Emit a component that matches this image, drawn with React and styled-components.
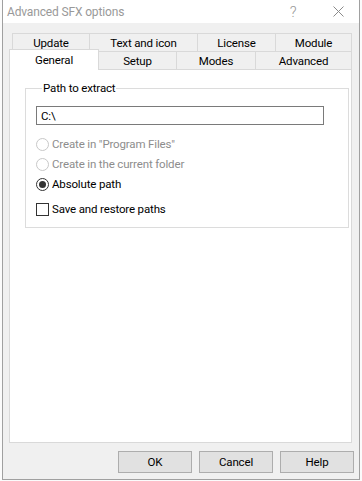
import React, { useState } from 'react'
import styled, { createGlobalStyle } from 'styled-components'

const GlobalStyle = createGlobalStyle`
  html, body {
    margin: 0;
    padding: 0;
    background: #fbfbfb;
  }
  body {
    font-family: Roboto, "Noto Sans", sans-serif;
    font-size: 11.5px;
    letter-spacing: -0.15px;
    line-height: 16px;
    color: #000;
  }
`

const Window = styled.div`
  box-sizing: border-box;
  width: 358px;
  height: 480px;
  margin-left: 2px;
  border: 1px solid #a0a0a0;
  border-top: none;
  background: #f0f0f0;
  display: flex;
  flex-direction: column;
`

const TitleBar = styled.div`
  height: 23px;
  display: flex;
  align-items: center;
  padding-left: 4px;
  background: #fff;
  color: #999;
  font-size: 12px;
`

const Title = styled.div`
  flex: 1;
`

const TitleButton = styled.div`
  width: ${p => p.$w}px;
  display: flex;
  justify-content: center;
  align-items: center;
  color: #9a9a9a;
  font-size: 15px;
  font-weight: 300;
`

const Body = styled.div`
  flex: 1;
  display: flex;
  flex-direction: column;
  padding: 10px 6px 0 6px;
`

const TabRow = styled.div`
  display: flex;
  height: ${p => p.$h}px;
  margin-left: ${p => p.$indent}px;
  margin-right: 1px;
  position: relative;
  z-index: ${p => p.$z};
`

const Tab = styled.div`
  box-sizing: border-box;
  width: ${p => p.$w}px;
  height: ${p => (p.$active ? 21 : 19)}px;
  margin-top: ${p => (p.$active ? -2 : 0)}px;
  border: 1px solid #d9d9d9;
  border-left: ${p => (p.$first ? '1px solid #d9d9d9' : 'none')};
  border-bottom: ${p => (p.$active ? 'none' : '1px solid #d9d9d9')};
  background: ${p => (p.$active ? '#fff' : '#f0f0f0')};
  display: flex;
  justify-content: center;
  align-items: ${p => (p.$active ? 'flex-start' : 'center')};
  padding-top: ${p => (p.$active ? 2 : 0)}px;
  cursor: default;
  ${p => p.$active && 'border-left: 1px solid #d9d9d9; border-right: 1px solid #d9d9d9;'}
`

const Panel = styled.div`
  box-sizing: border-box;
  height: 374px;
  margin-right: 1px;
  background: #fff;
  border: 1px solid #d9d9d9;
  padding: 10px 3px 0 15px;
`

const Group = styled.fieldset`
  box-sizing: border-box;
  margin: 0;
  width: 324px;
  height: 148px;
  border: 1px solid #dcdcdc;
  padding: 10px 0 0 10px;
  display: flex;
  flex-direction: column;
  legend {
    padding: 0 1px;
    margin-left: 6px;
    line-height: 16px;
  }
`

const PathInput = styled.input`
  box-sizing: border-box;
  width: 288px;
  height: 19px;
  border: 1px solid #7a7a7a;
  padding: 0 0 0 4px;
  font-family: inherit;
  font-size: inherit;
  letter-spacing: inherit;
  outline: none;
  margin: 0 0 9px 0;
`

const Option = styled.label`
  display: flex;
  align-items: center;
  height: 20px;
  color: ${p => (p.$disabled ? '#8d8d8d' : '#000')};
  margin-top: ${p => p.$gap || 0}px;
  gap: 3px;
`

const Radio = styled.span`
  box-sizing: border-box;
  width: 13px;
  height: 13px;
  border-radius: 50%;
  border: 1px solid ${p => (p.$disabled ? '#c8c8c8' : '#333')};
  display: flex;
  align-items: center;
  justify-content: center;
  &::after {
    content: '';
    width: 7px;
    height: 7px;
    border-radius: 50%;
    background: ${p => (p.$checked ? '#333' : 'transparent')};
  }
`

const Check = styled.span`
  box-sizing: border-box;
  width: 13px;
  height: 13px;
  border: 1px solid #333;
  background: #fff;
`

const Footer = styled.div`
  display: flex;
  justify-content: flex-end;
  gap: 7px;
  padding: 8px 0 0 0;
  margin-right: -1px;
`

const Button = styled.button`
  box-sizing: border-box;
  width: 74px;
  height: 22px;
  background: #e1e1e1;
  border: 1px solid #adadad;
  font-family: inherit;
  font-size: inherit;
  letter-spacing: inherit;
  color: #000;
  padding: 0;
`

const backTabs = [
  ['Update', 78],
  ['Text and icon', 108],
  ['License', 78],
  ['Module', 76],
]

const frontTabs = [
  ['General', 90],
  ['Setup', 78],
  ['Modes', 79],
  ['Advanced', 96],
]

export default function App() {
  const [path, setPath] = useState('C:\\')
  const [active, setActive] = useState('General')

  return (
    <>
      <GlobalStyle />
      <Window>
        <TitleBar>
          <Title>Advanced SFX options</Title>
          <TitleButton $w={48}>?</TitleButton>
          <TitleButton $w={42}>
            <svg width="11" height="11" viewBox="0 0 11 11">
              <path d="M0.5 0.5 L10.5 10.5 M10.5 0.5 L0.5 10.5" stroke="#8a8a8a" strokeWidth="1" fill="none" />
            </svg>
          </TitleButton>
        </TitleBar>
        <Body>
          <TabRow $h={18} $indent={3} $z={1}>
            {backTabs.map(([t, w], i) => (
              <Tab key={t} $w={w} $first={i === 0} onClick={() => setActive(t)}>
                {t}
              </Tab>
            ))}
          </TabRow>
          <TabRow $h={18} $indent={0} $z={2}>
            {frontTabs.map(([t, w], i) => (
              <Tab
                key={t}
                $w={w}
                $first={i === 0}
                $active={t === active}
                onClick={() => setActive(t)}
              >
                {t}
              </Tab>
            ))}
          </TabRow>
          <Panel>
            <Group>
              <legend>Path to extract</legend>
              <PathInput value={path} onChange={e => setPath(e.target.value)} />
              <Option $disabled>
                <Radio $disabled />
                Create in "Program Files"
              </Option>
              <Option $disabled>
                <Radio $disabled />
                Create in the current folder
              </Option>
              <Option>
                <Radio $checked />
                Absolute path
              </Option>
              <Option $gap={5}>
                <Check />
                Save and restore paths
              </Option>
            </Group>
          </Panel>
          <Footer>
            <Button>OK</Button>
            <Button>Cancel</Button>
            <Button>Help</Button>
          </Footer>
        </Body>
      </Window>
    </>
  )
}
